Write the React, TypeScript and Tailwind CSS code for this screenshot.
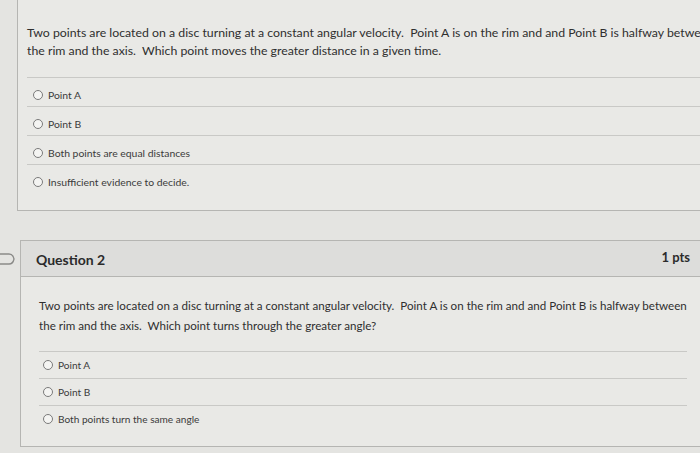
import React from "react";

const q1Answers = [
  "Point A",
  "Point B",
  "Both points are equal distances",
  "Insufficient evidence to decide.",
];

const q2Answers = ["Point A", "Point B", "Both points turn the same angle"];

function Radio() {
  return (
    <span className="inline-block w-[10px] h-[10px] rounded-full border border-[#7a7a7a] bg-[#f4f4f2] shrink-0" />
  );
}

function AnswerRow({ label, compact }: { label: string; compact?: boolean }) {
  return (
    <div
      className={
        compact
          ? "border-t border-[#c9c9c6] h-[27px] pt-[6px] flex items-start pl-[4px]"
          : "border-t border-[#c9c9c6] h-[29px] pt-[10px] flex items-start pl-[6px]"
      }
    >
      <div className="flex items-center gap-[5px] h-[14px]">
        <Radio />
        <span
          className={
            compact
              ? "text-[10.1px] leading-[14px] text-[#3b3b3b]"
              : "text-[10.4px] leading-[14px] text-[#3b3b3b]"
          }
        >
          {label}
        </span>
      </div>
    </div>
  );
}

function FlagIcon() {
  return (
    <svg width="16" height="14" viewBox="0 0 16 14" className="shrink-0">
      <path
        d="M-4 2 H9 Q13 2 14 7 Q13 12 9 12 H-4"
        fill="none"
        stroke="#8a8a88"
        strokeWidth="1.3"
      />
    </svg>
  );
}

export default function App() {
  return (
    <div className="w-[700px] h-[453px] overflow-hidden bg-[#e4e4e1] font-['Lato','Liberation_Sans',sans-serif] flex flex-col">
      {/* Question 1 (scrolled, header off screen) */}
      <div className="ml-[17px] w-[700px] shrink-0 border-l border-b border-[#b5b5b2] bg-[#e9e9e6] pt-[24px] pl-[9px] pb-[17px]">
        <p className="text-[12.3px] leading-[18px] text-[#2f2f2f] w-[690px]">
          Two points are located on a disc turning at a constant angular
          velocity.&nbsp; Point A is on the rim and and Point B is halfway between
          the rim and the axis.&nbsp; Which point moves the greater distance in a
          given time.
        </p>
        <div className="mt-[17px]">
          {q1Answers.map((a) => (
            <AnswerRow key={a} label={a} />
          ))}
        </div>
      </div>

      {/* Question 2 */}
      <div className="relative mt-[29px] ml-[20px] w-[690px] shrink-0 border border-[#b5b5b2] bg-[#e9e9e6]">
        <div className="absolute left-[-21px] top-[11px]">
          <FlagIcon />
        </div>
        <div className="h-[36px] border-b border-[#b5b5b2] flex items-center justify-between pl-[15px] pr-[19px] bg-[#dddddb]">
          <span className="text-[14px] font-bold text-[#2b2b2b] mt-[2px]">
            Question 2
          </span>
          <span className="text-[13px] font-bold text-[#2b2b2b] mb-[2px]">
            1 pts
          </span>
        </div>
        <div className="pl-[18px] pr-[12px] pt-[19px] pb-[14px]">
          <p className="text-[11.6px] leading-[20px] text-[#2f2f2f]">
            Two points are located on a disc turning at a constant angular
            velocity.&nbsp; Point A is on the rim and and Point B is halfway
            between the rim and the axis.&nbsp; Which point turns through the
            greater angle?
          </p>
          <div className="mt-[15px] mr-[10px]">
            {q2Answers.map((a) => (
              <AnswerRow key={a} label={a} compact />
            ))}
          </div>
        </div>
      </div>
    </div>
  );
}
